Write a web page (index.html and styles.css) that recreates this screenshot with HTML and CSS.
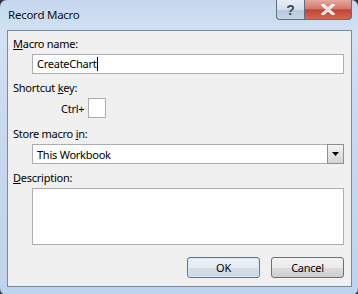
FILE: index.html
```html
<!DOCTYPE html>
<html lang="en">
<head>
    <meta charset="UTF-8">
    <meta name="viewport" content="width=device-width, initial-scale=1.0">
    <title>Record Macro</title>
    <link rel="stylesheet" href="styles.css">
</head>
<body>
    <div class="window">
        <div class="titlebar">
            <span class="title">Record Macro</span>
            <div class="caption-buttons">
                <button class="cap-btn help">?</button>
                <button class="cap-btn close">
                    <svg width="14" height="11" viewBox="0 0 14 11">
                        <path d="M2 1 L12 10 M12 1 L2 10" stroke="#fff" stroke-width="3" stroke-linecap="square" fill="none"/>
                        <path d="M2 1 L12 10 M12 1 L2 10" stroke="#5a1010" stroke-width="0.6" fill="none" opacity="0.35"/>
                    </svg>
                </button>
            </div>
        </div>
        <div class="client">
            <div class="label"><u>M</u>acro name:</div>
            <div class="field name-field">CreateChart<span class="caret"></span></div>

            <div class="label">Shortcut <u>k</u>ey:</div>
            <div class="shortcut">
                <span>Ctrl+</span>
                <span class="key-box"></span>
            </div>

            <div class="label">Store macro <u>i</u>n:</div>
            <div class="field select">
                <span>This Workbook</span>
                <span class="drop-btn">
                    <svg width="7" height="4" viewBox="0 0 7 4"><path d="M0 0 H7 L3.5 4 Z" fill="#000"/></svg>
                </span>
            </div>

            <div class="label"><u>D</u>escription:</div>
            <div class="field description"></div>

            <div class="actions">
                <button class="btn default">OK</button>
                <button class="btn">Cancel</button>
            </div>
        </div>
    </div>
</body>
</html>
```

FILE: styles.css
```css
html, body {
    margin: 0;
    padding: 0;
    background: #2b2f36;
}
body {
    width: 358px;
    height: 294px;
    overflow: hidden;
    font-family: "Noto Sans", "Liberation Sans", sans-serif;
    font-size: 11px;
    letter-spacing: -0.25px;
    color: #000;
}
.window {
    box-sizing: border-box;
    margin: -1px;
    width: 360px;
    height: 297px;
    border: 1px solid #4a5564;
    border-radius: 8px;
    background: linear-gradient(180deg, #c4d7ee 0%, #d3e2f4 12%, #c8daf0 40%, #bed3ec 100%);
    padding: 0 6px 0 7px;
}
.titlebar {
    display: flex;
    justify-content: space-between;
    align-items: flex-start;
    height: 30px;
}
.title {
    padding: 7px 0 0 1px;
    font-size: 11.5px;
    color: #111;
}
.caption-buttons {
    display: flex;
}
.cap-btn {
    height: 20px;
    border: 1px solid #5f6e82;
    border-top: none;
    margin: 0;
    padding: 0;
    font-family: "Liberation Sans", sans-serif;
    display: flex;
    align-items: center;
    justify-content: center;
}
.help {
    width: 28px;
    border-right: none;
    border-radius: 0 0 0 4px;
    background: linear-gradient(180deg, #e6edf6 0%, #d3dfee 50%, #b9c8da 51%, #c7d4e4 100%);
    color: #3d4b5e;
    font-size: 14px;
    font-weight: bold;
}
.close {
    width: 48px;
    border-radius: 0 0 4px 0;
    background: linear-gradient(180deg, #e5a89e 0%, #d6786b 45%, #c04432 52%, #d26a4e 100%);
}
.client {
    box-sizing: border-box;
    height: 257px;
    background: #f0f0f0;
    border: 1px solid #7e8a99;
    padding: 5px 7px 0 5px;
    display: flex;
    flex-direction: column;
}
.label {
    line-height: 16px;
    margin-bottom: 2px;
}
.field {
    box-sizing: border-box;
    margin-left: 19px;
    background: #fff;
    border: 1px solid #abadb3;
}
.name-field {
    height: 20px;
    line-height: 18px;
    padding-left: 4px;
    margin-bottom: 6px;
}
.caret {
    display: inline-block;
    width: 1px;
    height: 14px;
    background: #000;
    vertical-align: -3px;
}
.shortcut {
    display: flex;
    align-items: center;
    gap: 4px;
    padding-left: 48px;
    margin-bottom: 8px;
}
.key-box {
    box-sizing: border-box;
    width: 18px;
    height: 20px;
    background: #fff;
    border: 1px solid #abadb3;
}
.select {
    display: flex;
    justify-content: space-between;
    align-items: center;
    height: 20px;
    padding-left: 4px;
    margin-bottom: 6px;
}
.drop-btn {
    box-sizing: border-box;
    width: 17px;
    height: 20px;
    margin-right: -1px;
    border: 1px solid #8e8f8f;
    background: linear-gradient(180deg, #f3f3f3 0%, #e4e4e4 50%, #d4d4d4 100%);
    display: flex;
    align-items: center;
    justify-content: center;
}
.description {
    height: 57px;
    margin-bottom: 12px;
}
.actions {
    display: flex;
    justify-content: flex-end;
    gap: 11px;
}
.btn {
    box-sizing: border-box;
    width: 73px;
    height: 21px;
    font-family: inherit;
    font-size: 11px;
    letter-spacing: -0.25px;
    border: 1px solid #707070;
    border-radius: 3px;
    background: linear-gradient(180deg, #f2f2f2 0%, #ebebeb 50%, #dddddd 51%, #cfcfcf 100%);
    padding: 0;
}
.btn.default {
    border-color: #3c7fb1;
    box-shadow: inset 0 0 0 1px #d6eaf6;
    background: linear-gradient(180deg, #eef2f5 0%, #e6ecf1 50%, #d7dfe6 51%, #cdd6de 100%);
}
```
